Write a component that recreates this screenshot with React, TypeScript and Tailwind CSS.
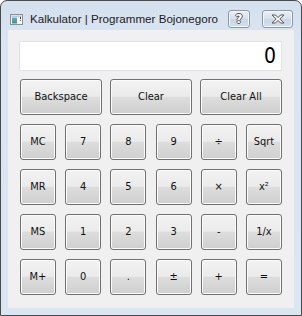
const font = "font-['DejaVu_Sans_Condensed','DejaVu_Sans',sans-serif]";

const grid = [
  ['MC', '7', '8', '9', '÷', 'Sqrt'],
  ['MR', '4', '5', '6', '×', 'x²'],
  ['MS', '1', '2', '3', '-', '1/x'],
  ['M+', '0', '.', '±', '+', '='],
];

function Key({ label, wide }: { label: string; wide?: boolean }) {
  return (
    <button
      className={`${wide ? 'w-[82px]' : 'w-[36px]'} h-[36px] rounded-[3px] border border-[#707070] bg-[linear-gradient(#f2f2f2_0%,#ebebeb_48%,#dddddd_50%,#cfcfcf_100%)] shadow-[inset_0_0_0_1px_#fcfcfc] text-[11px] text-[#111] ${font} flex items-center justify-center`}
    >
      {label}
    </button>
  );
}

function TitleIcon() {
  return (
    <svg width="13" height="11" viewBox="0 0 13 11" className="mt-[1px]">
      <defs>
        <linearGradient id="g" x1="0" y1="0" x2="0" y2="1">
          <stop offset="0" stopColor="#6aa8d8" />
          <stop offset="1" stopColor="#3e9a6a" />
        </linearGradient>
      </defs>
      <rect x="0.5" y="0.5" width="12" height="10" fill="#f4f6f8" stroke="#8a9099" />
      <rect x="1.5" y="1.5" width="10" height="1.5" fill="#b9c8d8" />
      <rect x="2" y="3.5" width="5" height="6" fill="url(#g)" />
      <rect x="10" y="3" width="1" height="2" fill="#333" />
      <rect x="10" y="6" width="1" height="1" fill="#666" />
    </svg>
  );
}

export default function App() {
  return (
    <div className="w-[302px] h-[316px] rounded-t-[7px] border border-[#4a4a4a] bg-[linear-gradient(#d4e0ee,#dae5f2_40px,#dbe6f3)] flex flex-col">
      <div className="h-[29px] flex items-start pl-[9px] pr-[8px]">
        <div className="mt-[12px] shrink-0">
          <TitleIcon />
        </div>
        <span className="ml-[7px] mt-[9px] whitespace-nowrap text-[11.6px] leading-[18px] text-[#1b1b1b] font-['Liberation_Sans',Arial,sans-serif]">
          Kalkulator | Programmer Bojonegoro
        </span>
        <div className="ml-auto mt-[9px] flex gap-[12px] shrink-0">
          <div className="w-[22px] h-[18px] rounded-[3px] border border-[#8a98aa] bg-[linear-gradient(#e9eff6,#d6e0ec_50%,#c9d6e6_51%,#d4dfec)] shadow-[inset_0_0_0_1px_#f3f7fb] flex items-center justify-center">
            <span className="text-[12px] font-bold leading-none text-white font-['DejaVu_Sans',sans-serif] [text-shadow:1px_0_0_#555,-1px_0_0_#555,0_1px_0_#555,0_-1px_0_#555]">
              ?
            </span>
          </div>
          <div className="w-[31px] h-[18px] rounded-[3px] border border-[#8a98aa] bg-[linear-gradient(#e9eff6,#d6e0ec_50%,#c9d6e6_51%,#d4dfec)] shadow-[inset_0_0_0_1px_#f3f7fb] flex items-center justify-center">
            <svg width="14" height="10" viewBox="0 0 14 10">
              <path
                d="M1 1h3.5L7 3.6 9.5 1H13L8.8 5 13 9H9.5L7 6.4 4.5 9H1l4.2-4z"
                fill="#fff"
                stroke="#555"
                strokeWidth="1"
                strokeLinejoin="round"
              />
            </svg>
          </div>
        </div>
      </div>
      <div className="ml-[7px] w-[286px] h-[278px] bg-[#f0f0f0] pt-[11px] pl-[11px]">
        <div className="w-[263px] h-[30px] bg-white border border-[#dde3ea] flex items-center justify-end pr-[5px]">
          <span className={`text-[21px] leading-none text-black ${font}`}>0</span>
        </div>
        <div className="ml-[1px] mt-[8px] w-[262px]">
          <div className="flex gap-[8px]">
            <Key label="Backspace" wide />
            <Key label="Clear" wide />
            <Key label="Clear All" wide />
          </div>
          <div className="mt-[9px] flex flex-col gap-[9px]">
            {grid.map((row, i) => (
              <div key={i} className="flex justify-between">
                {row.map((k) => (
                  <Key key={k} label={k} />
                ))}
              </div>
            ))}
          </div>
        </div>
      </div>
    </div>
  );
}
